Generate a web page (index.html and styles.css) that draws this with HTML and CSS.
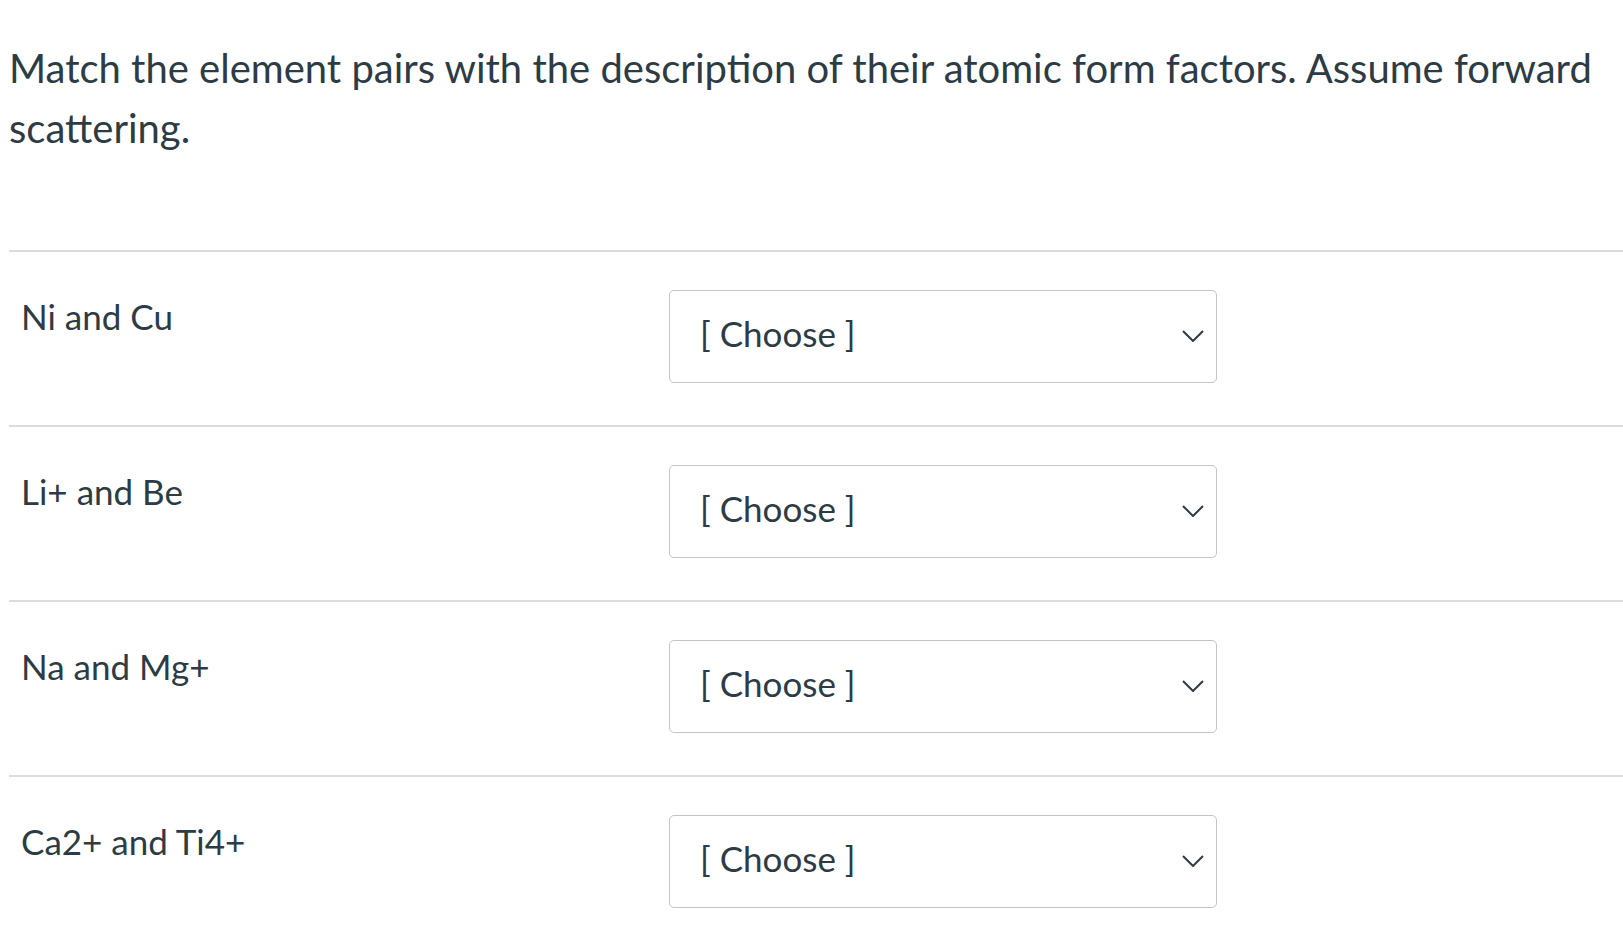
FILE: index.html
```html
<!DOCTYPE html>
<html lang="en">
<head>
<meta charset="utf-8">
<title>Matching question</title>
<link rel="stylesheet" href="styles.css">
</head>
<body>
<div class="question">
  <p class="prompt">Match the element pairs with the description of their atomic form factors. Assume forward scattering.</p>
  <div class="answers">
    <div class="row">
      <div class="label">Ni and Cu</div>
      <div class="select" role="combobox"><span class="value">[ Choose ]</span><svg class="chev" width="22" height="12" viewBox="0 0 22 12"><path d="M1 1 L11 11 L21 1" fill="none" stroke="#2d3b45" stroke-width="2"/></svg></div>
    </div>
    <div class="row">
      <div class="label">Li+ and Be</div>
      <div class="select" role="combobox"><span class="value">[ Choose ]</span><svg class="chev" width="22" height="12" viewBox="0 0 22 12"><path d="M1 1 L11 11 L21 1" fill="none" stroke="#2d3b45" stroke-width="2"/></svg></div>
    </div>
    <div class="row">
      <div class="label">Na and Mg+</div>
      <div class="select" role="combobox"><span class="value">[ Choose ]</span><svg class="chev" width="22" height="12" viewBox="0 0 22 12"><path d="M1 1 L11 11 L21 1" fill="none" stroke="#2d3b45" stroke-width="2"/></svg></div>
    </div>
    <div class="row">
      <div class="label">Ca2+ and Ti4+</div>
      <div class="select" role="combobox"><span class="value">[ Choose ]</span><svg class="chev" width="22" height="12" viewBox="0 0 22 12"><path d="M1 1 L11 11 L21 1" fill="none" stroke="#2d3b45" stroke-width="2"/></svg></div>
    </div>
  </div>
</div>
</body>
</html>
```
FILE: styles.css
```css
html, body {
  margin: 0;
  padding: 0;
  background: #ffffff;
}
body {
  font-family: Lato, "Open Sans", "Liberation Sans", sans-serif;
  color: #2d3b45;
}
.question {
  margin-left: 9px;
}
.prompt {
  margin: 38px 0 92px 0;
  font-size: 40px;
  line-height: 60px;
}
.row {
  display: grid;
  grid-template-columns: 660px 548px;
  border-top: 2px solid #dcdcdc;
  padding: 38px 0 42px 0;
}
.label {
  padding-left: 12px;
  margin-top: 2px;
  font-size: 35px;
  line-height: 48px;
}
.select {
  box-sizing: border-box;
  height: 93px;
  border: 1px solid #c4c4c4;
  border-radius: 5px;
  display: flex;
  align-items: flex-start;
  justify-content: space-between;
  padding: 22px 12px 0 30px;
}
.value {
  font-size: 35px;
  line-height: 40px;
}
.chev {
  display: block;
  margin-top: 17px;
}
```
